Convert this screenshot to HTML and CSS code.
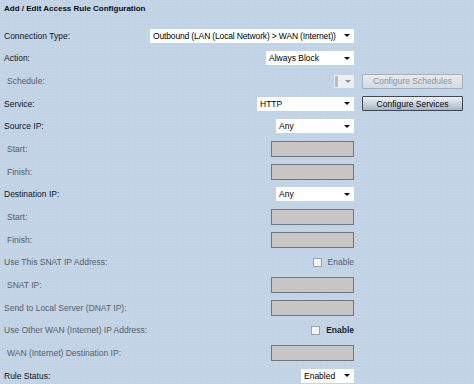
FILE: index.html
```html
<!DOCTYPE html>
<html lang="en">

<head>
    <meta charset="UTF-8"/>
    <title>Add / Edit Access Rule Configuration</title>
    <link rel="stylesheet" href="styles.css">
</head>

<body>
    <div class="page">
        <h1 class="title">Add / Edit Access Rule Configuration</h1>

        <div class="form">
            <!-- 连接类型 -->
            <div class="row">
                <span class="label">Connection Type:</span>
                <div class="select w-conn"><span>Outbound (LAN (Local Network) &gt; WAN (Internet))</span><i class="arrow"></i></div>
            </div>
            <div class="row">
                <span class="label">Action:</span>
                <div class="select w-action"><span>Always Block</span><i class="arrow"></i></div>
            </div>
            <div class="row">
                <span class="label off sub">Schedule:</span>
                <div class="select mini"><b class="bar"></b><i class="arrow grey"></i></div>
                <button class="btn" disabled>Configure Schedules</button>
            </div>
            <div class="row">
                <span class="label">Service:</span>
                <div class="select w-service"><span>HTTP</span><i class="arrow"></i></div>
                <button class="btn">Configure Services</button>
            </div>

            <!-- 源地址 -->
            <div class="row">
                <span class="label">Source IP:</span>
                <div class="select w-any"><span>Any</span><i class="arrow"></i></div>
            </div>
            <div class="row">
                <span class="label off sub">Start:</span>
                <input class="ip" type="text" disabled/>
            </div>
            <div class="row">
                <span class="label off sub">Finish:</span>
                <input class="ip" type="text" disabled/>
            </div>

            <!-- 目标地址 -->
            <div class="row">
                <span class="label">Destination IP:</span>
                <div class="select w-any"><span>Any</span><i class="arrow"></i></div>
            </div>
            <div class="row">
                <span class="label off sub">Start:</span>
                <input class="ip" type="text" disabled/>
            </div>
            <div class="row">
                <span class="label off sub">Finish:</span>
                <input class="ip" type="text" disabled/>
            </div>

            <!-- NAT -->
            <div class="row">
                <span class="label off">Use This SNAT IP Address:</span>
                <label class="check off"><i class="box"></i>Enable</label>
            </div>
            <div class="row">
                <span class="label off sub">SNAT IP:</span>
                <input class="ip" type="text" disabled/>
            </div>
            <div class="row">
                <span class="label off">Send to Local Server (DNAT IP):</span>
                <input class="ip" type="text" disabled/>
            </div>
            <div class="row">
                <span class="label off">Use Other WAN (Internet) IP Address:</span>
                <label class="check"><i class="box"></i>Enable</label>
            </div>
            <div class="row">
                <span class="label off sub">WAN (Internet) Destination IP:</span>
                <input class="ip" type="text" disabled/>
            </div>
            <div class="row">
                <span class="label">Rule Status:</span>
                <div class="select w-status"><span>Enabled</span><i class="arrow"></i></div>
            </div>
        </div>
    </div>
</body>

</html>
```

FILE: styles.css
```css
* {
    margin: 0;
    padding: 0;
    box-sizing: border-box;
}

body {
    background: #c1d3e4;
    font-family: "Liberation Sans", Arial, sans-serif;
    font-size: 8.5px;
    color: #0f151c;
}

.page {
    width: 474px;
    height: 384px;
    padding: 4px 11px 0 4px;
    background-color: #c1d3e4;
    background-image: radial-gradient(rgba(255, 255, 255, 0.12) 0.6px, transparent 0.8px);
    background-size: 3px 3px;
}

.title {
    font-size: 8px;
    font-weight: bold;
    height: 20.5px;
    line-height: 10px;
    color: #0a0e12;
}

.row {
    display: grid;
    grid-template-columns: auto 1fr 101px;
    column-gap: 8px;
    align-items: center;
    height: 22.67px;
}

.label {
    grid-column: 1;
    white-space: nowrap;
}

.label.off {
    color: #56606c;
}

.label.sub {
    padding-left: 3px;
}

/* 下拉框 */
.select {
    grid-column: 2;
    justify-self: end;
    height: 14px;
    background: #fff;
    display: flex;
    align-items: center;
    justify-content: space-between;
    padding: 0 3px 0 3px;
    color: #000;
    white-space: nowrap;
}

.w-conn {
    width: 204px;
    letter-spacing: -0.15px;
}

.w-action {
    width: 88px;
}

.w-service {
    width: 97px;
}

.w-any {
    width: 78px;
}

.w-status {
    width: 53px;
}

.select .arrow {
    width: 0;
    height: 0;
    border-left: 3px solid transparent;
    border-right: 3px solid transparent;
    border-top: 3px solid #111;
    margin-right: 1px;
}

.select.mini {
    width: 20px;
    height: 13px;
    background: #eceeef;
    padding: 0 2px 0 1px;
}

.select .bar {
    width: 3px;
    height: 11px;
    background: #b9bcbf;
}

.select .arrow.grey {
    border-top-color: #8d9297;
}

/* 按钮 */
.btn {
    grid-column: 3;
    height: 15px;
    font: 8.5px "Liberation Sans", Arial, sans-serif;
    color: #05080b;
    background: linear-gradient(#eef1f4, #c7d1db 55%, #a9b5c2);
    border: 1px solid #3e4854;
    border-radius: 1px;
}

.btn:disabled {
    color: #8b939c;
    background: linear-gradient(#e7ebef, #d3dbe3);
    border-color: #a5afb9;
}

/* 文本框 */
.ip {
    grid-column: 2;
    justify-self: end;
    width: 83px;
    height: 16px;
    background: #c9c5c5;
    border: 1px solid #6f7787;
    outline: none;
}

.check {
    grid-column: 2;
    justify-self: end;
    display: flex;
    align-items: center;
    gap: 6px;
    font-weight: bold;
    color: #1a2330;
}

.check.off {
    font-weight: normal;
    color: #56606c;
}

.check .box {
    width: 9px;
    height: 9px;
    background: #f4f4f4;
    border: 1px solid #9aa2ab;
}
```
